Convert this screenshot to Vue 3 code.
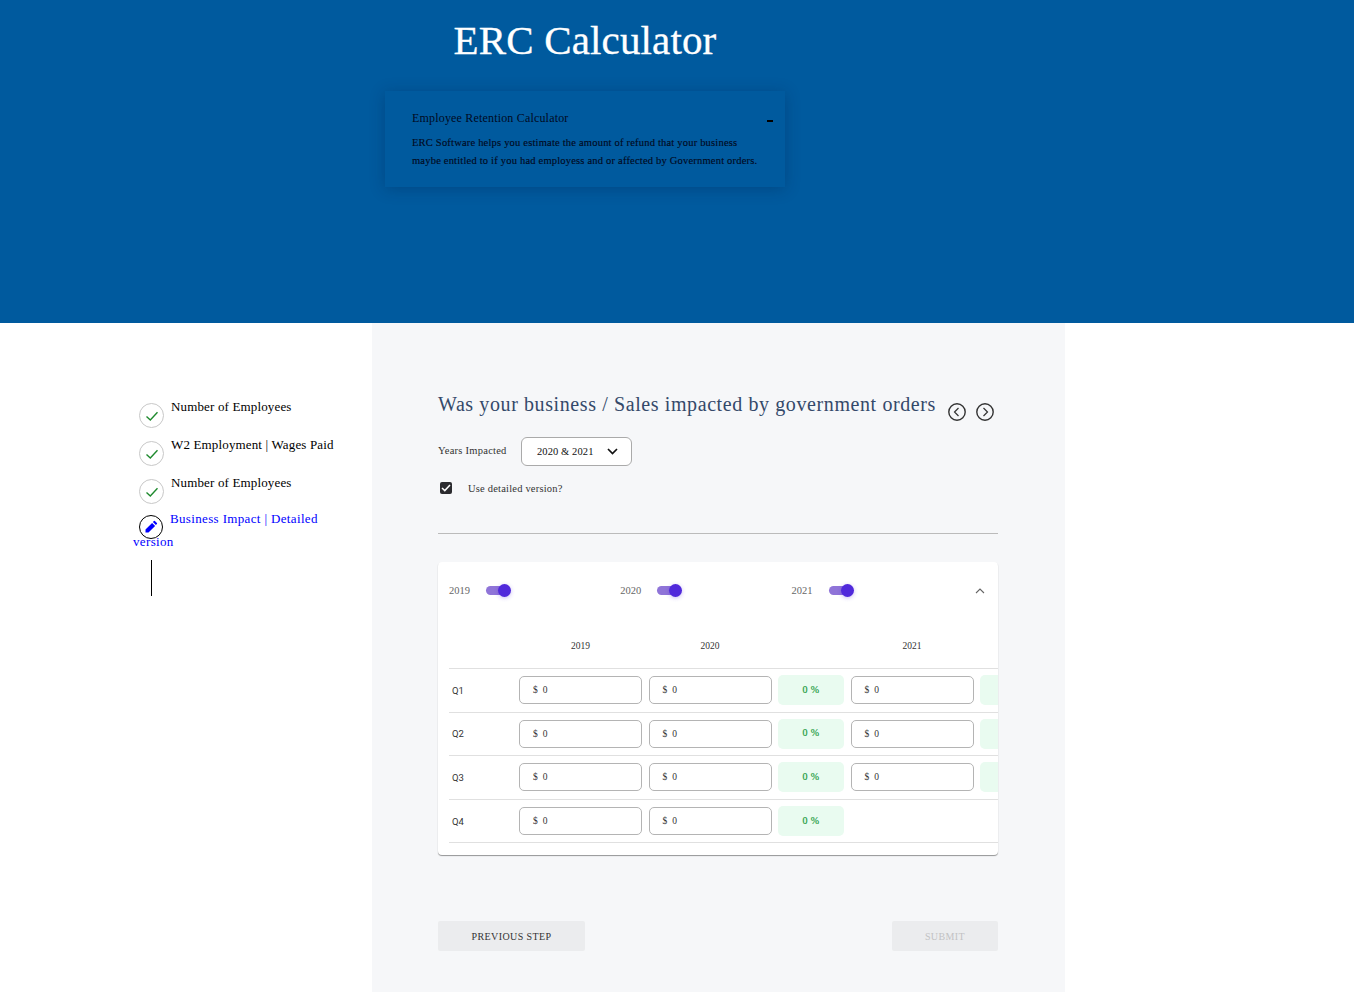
<script setup>
const done = ['Number of Employees', 'W2 Employment | Wages Paid', 'Number of Employees']
const toggles = ['2019', '2020', '2021']
const rows = [
  { q: 'Q1', full: true },
  { q: 'Q2', full: true },
  { q: 'Q3', full: true },
  { q: 'Q4', full: false }
]
</script>

<template>
  <div class="page">
    <header class="hero">
      <div class="hero-col">
        <h1 class="title">ERC Calculator</h1>
        <section class="intro">
          <div class="intro-head">
            <span>Employee Retention Calculator</span>
            <span class="minus"></span>
          </div>
          <p>ERC Software helps you estimate the amount of refund that your business maybe entitled to if you had employess and or affected by Government orders.</p>
        </section>
      </div>
    </header>

    <div class="body">
      <aside class="steps">
        <div v-for="(s, i) in done" :key="i" class="step">
          <span class="circle">
            <svg width="14" height="14" viewBox="0 0 14 14" fill="none"><path d="M1.5 7.5 5.3 11 12.5 3.2" stroke="#1f8a2e" stroke-width="1.4"/></svg>
          </span>
          <span class="step-text">{{ s }}</span>
        </div>
        <div class="step-current">
          <span class="circle-current">
            <svg width="14" height="14" viewBox="0 0 14 14"><path d="M1.5 12.5v-3l6.6-6.6 3 3-6.6 6.6zM8.9 2.1l1-1a.7.7 0 0 1 1 0l2 2a.7.7 0 0 1 0 1l-1 1z" fill="#0000ff"/></svg>
          </span>Business Impact | Detailed version
        </div>
        <div class="connector"></div>
      </aside>

      <main class="main">
        <div class="heading">
          <h2>Was your business / Sales impacted by government orders</h2>
          <div class="arrows">
            <svg width="18" height="18" viewBox="0 0 18 18" fill="none"><circle cx="9" cy="9" r="8.2" stroke="#333" stroke-width="1.4"/><path d="M10.5 5 6.5 9l4 4" stroke="#333" stroke-width="1.2"/></svg>
            <svg width="18" height="18" viewBox="0 0 18 18" fill="none"><circle cx="9" cy="9" r="8.2" stroke="#333" stroke-width="1.4"/><path d="M7.5 5l4 4-4 4" stroke="#333" stroke-width="1.2"/></svg>
          </div>
        </div>

        <div class="years">
          <span class="years-label">Years Impacted</span>
          <div class="select">
            <span>2020 &amp; 2021</span>
            <svg width="11" height="7" viewBox="0 0 11 7" fill="none"><path d="M1 1l4.5 4.5L10 1" stroke="#111" stroke-width="1.7"/></svg>
          </div>
        </div>

        <div class="check-row">
          <span class="checkbox">
            <svg width="10" height="8" viewBox="0 0 10 8" fill="none"><path d="M1 4l2.8 2.6L9 1" stroke="#fff" stroke-width="1.5"/></svg>
          </span>
          <span>Use detailed version?</span>
        </div>

        <hr class="divider" />

        <section class="card">
          <div class="toggles">
            <div v-for="t in toggles" :key="t" class="toggle-group">
              <span class="toggle-label">{{ t }}</span>
              <span class="track"><span class="thumb"></span></span>
            </div>
            <svg class="collapse" width="10" height="6" viewBox="0 0 10 6" fill="none"><path d="M1 5l4-4 4 4" stroke="#666" stroke-width="1.1"/></svg>
          </div>

          <div class="grid head">
            <span></span>
            <span class="col-year">2019</span>
            <span class="col-year">2020</span>
            <span></span>
            <span class="col-year">2021</span>
          </div>

          <div v-for="r in rows" :key="r.q" class="grid row">
            <span class="q">{{ r.q }}</span>
            <div class="money"><span>$</span><span>0</span></div>
            <div class="money"><span>$</span><span>0</span></div>
            <div class="pct">0 %</div>
            <template v-if="r.full">
              <div class="money"><span>$</span><span>0</span></div>
              <div class="pct"></div>
            </template>
          </div>
        </section>

        <div class="actions">
          <button class="btn prev">PREVIOUS STEP</button>
          <button class="btn submit">SUBMIT</button>
        </div>
      </main>
    </div>
  </div>
</template>

<style>
html, body { margin: 0; background: #fff; }
</style>

<style scoped>
.page {
  font-family: "Liberation Serif", "Times New Roman", serif;
  color: #000;
  overflow: hidden;
}
.hero {
  height: 323px;
  background: #005a9e;
  padding-left: 385px;
  box-sizing: border-box;
}
.hero-col { width: 400px; }
.title {
  margin: 0;
  padding-top: 17px;
  height: 91px;
  box-sizing: border-box;
  text-align: center;
  color: #fff;
  font-size: 41px;
  line-height: 47px;
  font-weight: 400;
  letter-spacing: 0.15px;
  -webkit-text-stroke: 0.3px #fff;
}
.intro {
  height: 96px;
  box-sizing: border-box;
  padding: 19px 27px 0;
  background: #005a9e;
  box-shadow: 0 2px 14px rgba(0, 30, 70, 0.28);
  color: #000a1f;
}
.intro-head {
  display: flex;
  justify-content: space-between;
  align-items: center;
  font-size: 12px;
  line-height: 16px;
  letter-spacing: 0.18px;
}
.minus {
  width: 6px;
  height: 2px;
  background: #000;
  margin: 6px -15px 0 0;
}
.intro p {
  margin: 8px -10px 0 0;
  font-size: 10.5px;
  line-height: 18px;
  letter-spacing: 0.2px;
  -webkit-text-stroke: 0.15px #000a1f;
}
.body { display: flex; }
.steps {
  width: 372px;
  box-sizing: border-box;
  padding: 75px 0 0 133px;
}
.step {
  display: flex;
  align-items: flex-start;
  height: 38px;
  padding-left: 6px;
  font-size: 13px;
  line-height: 18px;
  letter-spacing: 0.15px;
}
.circle {
  width: 25px;
  height: 25px;
  box-sizing: border-box;
  margin-top: 5px;
  border: 1.5px solid #c8c8c8;
  border-radius: 50%;
  display: flex;
  align-items: center;
  justify-content: center;
  flex: none;
}
.step-text { margin-left: 7px; }
.step-current {
  width: 200px;
  margin-top: -5.5px;
  color: #0000ff;
  font-size: 13px;
  line-height: 23px;
  letter-spacing: 0.35px;
}
.circle-current {
  display: inline-flex;
  align-items: center;
  justify-content: center;
  width: 24px;
  height: 24px;
  box-sizing: border-box;
  margin: 8.5px 7px -32.5px 6px;
  border: 1.5px solid #000;
  border-radius: 50%;
  vertical-align: top;
}
.connector {
  width: 1px;
  height: 36px;
  margin: 7.5px 0 0 18px;
  background: #000;
}
.main {
  width: 693px;
  box-sizing: border-box;
  padding: 67px 67px 41px 66px;
  background: #f6f7f9;
}
.heading { display: flex; align-items: flex-start; }
.heading h2 {
  margin: 0;
  font-size: 20px;
  line-height: 28px;
  font-weight: 400;
  color: #34496a;
  letter-spacing: 0.6px;
  white-space: nowrap;
}
.arrows {
  display: flex;
  gap: 10px;
  margin: 13px 0 0 12px;
}
.years {
  display: flex;
  align-items: center;
  margin-top: 16px;
  font-size: 10.5px;
}
.years-label {
  width: 83px;
  padding-bottom: 2px;
  color: #333;
  letter-spacing: 0.25px;
}
.select {
  width: 111px;
  height: 29px;
  box-sizing: border-box;
  display: flex;
  align-items: center;
  justify-content: space-between;
  padding: 0 13px 0 15px;
  background: #fff;
  border: 1px solid #aaa;
  border-radius: 6px;
  color: #111;
  letter-spacing: 0.1px;
}
.check-row {
  display: flex;
  align-items: center;
  margin-top: 15px;
  padding-left: 2px;
  height: 14px;
  font-size: 10.5px;
  letter-spacing: 0.2px;
  color: #333;
}
.checkbox {
  width: 12px;
  height: 12px;
  margin-right: 16px;
  border-radius: 2px;
  background: #2b2b2f;
  display: flex;
  align-items: center;
  justify-content: center;
}
.divider {
  margin: 38px 0 0;
  border: 0;
  border-top: 1px solid #bbb;
}
.card {
  margin-top: 28px;
  height: 293px;
  box-sizing: border-box;
  padding: 0 0 0 11px;
  background: #fff;
  border-radius: 4px;
  box-shadow: 0 1px 1px rgba(0, 0, 0, 0.4);
  overflow: hidden;
}
.toggles {
  display: flex;
  align-items: center;
  height: 57px;
  padding-right: 13px;
}
.toggle-group {
  width: 171.3px;
  display: flex;
  align-items: center;
  flex: none;
  font-size: 10.5px;
}
.toggle-label { width: 37px; color: #666; }
.track {
  position: relative;
  width: 24px;
  height: 9px;
  border-radius: 5px;
  background: #8f74d8;
}
.thumb {
  position: absolute;
  right: -1px;
  top: -2px;
  width: 13px;
  height: 13px;
  border-radius: 50%;
  background: #5029db;
  box-shadow: 0 1px 4px rgba(80, 40, 220, 0.3);
}
.collapse { margin-left: auto; }
.grid {
  display: grid;
  grid-template-columns: 63.5px 123px 123px 66px 123px 66px;
  column-gap: 6.5px;
  align-items: center;
  width: 620px;
  box-sizing: border-box;
}
.head {
  height: 50px;
  border-bottom: 1px solid #e0e0e0;
}
.col-year {
  text-align: center;
  font-size: 9.5px;
  color: #333;
  padding-top: 5px;
}
.row {
  height: 43.6px;
  border-bottom: 1px solid #e0e0e0;
}
.q {
  padding-left: 3px;
  font-family: Roboto, "Liberation Sans", sans-serif;
  font-size: 9.5px;
  color: #333;
}
.money {
  height: 28px;
  box-sizing: border-box;
  display: flex;
  align-items: center;
  gap: 5px;
  padding-left: 13px;
  background: #fff;
  border: 1px solid #b4b4b4;
  border-radius: 5px;
  font-size: 9.5px;
  color: #333;
}
.pct {
  height: 30px;
  box-sizing: border-box;
  padding-bottom: 2px;
  display: flex;
  align-items: center;
  justify-content: center;
  background: #e9fbf0;
  border-radius: 5px;
  color: #1f9c3f;
  font-size: 10px;
  letter-spacing: 0.4px;
  -webkit-text-stroke: 0.2px #1f9c3f;
}
.actions {
  display: flex;
  justify-content: space-between;
  margin-top: 66px;
}
.btn {
  height: 30px;
  border: 0;
  border-radius: 2px;
  background: #ebecee;
  font-family: inherit;
  font-size: 10px;
  letter-spacing: 0.4px;
  padding: 0;
}
.prev { width: 147px; color: #333; }
.submit { width: 106px; color: #c2c2c4; }
</style>
